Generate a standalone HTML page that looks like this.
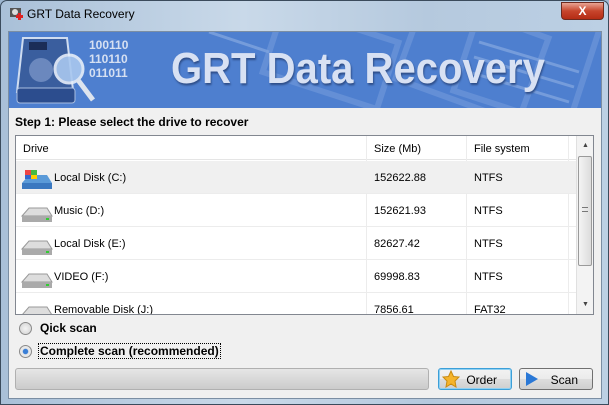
<!DOCTYPE html>
<html><head><meta charset="utf-8"><style>
*{margin:0;padding:0;box-sizing:border-box}
body{width:609px;height:405px;overflow:hidden;font-family:"Liberation Sans",sans-serif;font-size:11px;color:#000;background:#9db6d0}
.win{position:absolute;left:0;top:0;width:609px;height:405px;background:linear-gradient(90deg,#a9c0d8,#c9d9e9 40%,#b5c9de 70%,#bcd0e4);border:1px solid #3b4b5c;border-radius:7px 7px 0 0}
.title{position:absolute;left:26px;top:6px;font-size:12px;color:#000}
.close{position:absolute;left:560px;top:1px;width:43px;height:18px;border-radius:0 0 4px 4px;background:linear-gradient(#e8a493,#c7452c 50%,#b52c14);border:1px solid #6d2a1f;color:#fff;font-weight:bold;font-size:12px;text-align:center;line-height:16px}
.client{position:absolute;left:7px;top:30px;width:594px;height:368px;background:#f0f0f0;border:1px solid #7b8ea3}
.banner{position:absolute;left:0;top:0;width:592px;height:76px;background:#4e7fcf;overflow:hidden}
.bn{position:absolute;left:80px;top:6px;color:#d6e0f2;font-weight:bold;font-size:12px;line-height:14px}
.bt{position:absolute;left:162px;top:12px;color:#d8e1f3;font-weight:bold;font-size:44px;text-shadow:1px 2px 2px #2f4f8a;white-space:nowrap;transform:scaleX(0.91);transform-origin:0 0}
.step{position:absolute;left:6px;top:83px;font-weight:bold;font-size:12px}
.list{position:absolute;left:6px;top:103px;width:579px;height:180px;background:#fff;border:1px solid #828790;overflow:hidden}
.hdr{position:absolute;left:0;top:0;height:24px;width:560px;border-bottom:1px solid #e5e5e5;background:#fff}
.hdr span{position:absolute;top:7px}
.row{position:absolute;left:0;height:33px;width:560px;border-bottom:1px solid #ececec}
.row span{position:absolute;top:11px}
.c1{left:38px}.c2{left:358px}.c3{left:458px}
.sep{position:absolute;top:0;width:1px;height:180px;background:#ececec}
.sb{position:absolute;right:0;top:0;width:17px;height:178px;background:#f3f3f3;border-left:1px solid #e0e0e0}
.thumb{position:absolute;left:1px;top:20px;width:14px;height:110px;border:1px solid #9a9a9a;border-radius:2px;background:linear-gradient(90deg,#f4f4f4,#dcdcdc)}
.rad{position:absolute;left:10px;width:13px;height:13px;border-radius:50%;border:1px solid #8a8a8a;background:radial-gradient(#f4f4f4,#d0d0d0)}
.rl{position:absolute;left:31px;font-weight:bold;font-size:12px}
.prog{position:absolute;left:6px;top:336px;width:414px;height:22px;border:1px solid #b0b0b0;border-radius:3px;background:linear-gradient(#e6e6e6,#cbcbcb)}
.btn{position:absolute;top:336px;width:74px;height:22px;border:1px solid #707070;border-radius:3px;background:linear-gradient(#f2f2f2,#ebebeb 50%,#dddddd 51%,#cfcfcf);font-size:12px}
.btn span{position:absolute;right:14px;top:4px}
</style></head><body>
<div class="win">
<svg style="position:absolute;left:7px;top:5px" width="16" height="16"><rect x="2" y="2" width="11" height="9" fill="#555"/><circle cx="7" cy="6" r="3" fill="#ddd"/><rect x="8" y="9" width="7" height="3" fill="#d22"/><rect x="10" y="7" width="3" height="7" fill="#d22"/></svg>
<div class="title">GRT Data Recovery</div>
<div class="close">X</div>
<div class="client">
<div class="banner">
<svg style="position:absolute;left:0;top:0" width="592" height="76">
<g fill="none" stroke="#6a94d8" stroke-width="6" opacity="0.8">
<rect x="260" y="-10" width="120" height="70" transform="rotate(18 320 30)"/>
<rect x="400" y="-20" width="130" height="90" transform="rotate(20 460 20)"/>
<rect x="460" y="-30" width="120" height="110" transform="rotate(18 520 20)"/>
</g>
<g stroke="#7fa4de" stroke-width="3" opacity="0.8"><line x1="470" y1="10" x2="570" y2="40"/><line x1="465" y1="25" x2="565" y2="55"/><line x1="460" y1="40" x2="560" y2="70"/><line x1="200" y1="0" x2="260" y2="20"/></g>
<path d="M14 6 L58 6 L64 58 L8 60 Z" fill="#3a5e9e" stroke="#cfdcf0" stroke-width="2"/>
<rect x="8" y="56" width="58" height="15" rx="3" fill="#2c4d8e" stroke="#a8bde0"/>
<rect x="20" y="10" width="18" height="8" fill="#1b2d57"/>
<circle cx="32" cy="38" r="12" fill="#6b88be"/>
<circle cx="60" cy="37" r="14" fill="#a9c8ef" stroke="#e6eef9" stroke-width="3" opacity="0.9"/>
<line x1="69" y1="48" x2="84" y2="68" stroke="#dde4ee" stroke-width="5"/>
</svg>
<div class="bn">100110<br>110110<br>011011</div>
<div class="bt">GRT Data Recovery</div>
</div>
<div class="step">Step 1: Please select the drive to recover</div>
<div class="list">
<div class="hdr"><span style="left:7px">Drive</span><span class="c2">Size (Mb)</span><span class="c3">File system</span></div>
<div class="sep" style="left:350px"></div><div class="sep" style="left:450px"></div><div class="sep" style="left:552px"></div>
<div class="row" style="top:25px;background:#f0f0f0"><span class="c1">Local Disk (C:)</span><span class="c2">152622.88</span><span class="c3">NTFS</span></div>
<div class="row" style="top:58px"><span class="c1">Music (D:)</span><span class="c2">152621.93</span><span class="c3">NTFS</span></div>
<div class="row" style="top:91px"><span class="c1">Local Disk (E:)</span><span class="c2">82627.42</span><span class="c3">NTFS</span></div>
<div class="row" style="top:124px"><span class="c1">VIDEO (F:)</span><span class="c2">69998.83</span><span class="c3">NTFS</span></div>
<div class="row" style="top:157px"><span class="c1">Removable Disk (J:)</span><span class="c2">7856.61</span><span class="c3">FAT32</span></div>
<svg style="position:absolute;left:3px;top:25px" width="34" height="160">
<g><path d="M3 22 L10 14 L28 14 L33 22 Z" fill="#5a9ad8"/><rect x="3" y="22" width="30" height="6" fill="#3a78c0"/><rect x="6" y="9" width="6" height="5" fill="#e44"/><rect x="12" y="9" width="6" height="5" fill="#4b4"/><rect x="6" y="14" width="6" height="4" fill="#36c"/><rect x="12" y="14" width="6" height="4" fill="#fc0"/></g>
<g transform="translate(0,33)"><path d="M3 22 L10 14 L28 14 L33 22 Z" fill="#ddd" stroke="#999"/><rect x="3" y="22" width="30" height="6" fill="#aaa"/><rect x="27" y="24" width="3" height="2" fill="#3c3"/></g>
<g transform="translate(0,66)"><path d="M3 22 L10 14 L28 14 L33 22 Z" fill="#ddd" stroke="#999"/><rect x="3" y="22" width="30" height="6" fill="#aaa"/><rect x="27" y="24" width="3" height="2" fill="#3c3"/></g>
<g transform="translate(0,99)"><path d="M3 22 L10 14 L28 14 L33 22 Z" fill="#ddd" stroke="#999"/><rect x="3" y="22" width="30" height="6" fill="#aaa"/><rect x="27" y="24" width="3" height="2" fill="#3c3"/></g>
<g transform="translate(0,132)"><path d="M3 22 L10 14 L28 14 L33 22 Z" fill="#ddd" stroke="#999"/></g>
</svg>
<div class="sb"><div style="position:absolute;left:5px;top:6px;font-size:7px;color:#444">▲</div><div class="thumb"><div style="position:absolute;left:3px;top:50px;width:6px;height:5px;border-top:1px solid #777;border-bottom:1px solid #777"></div></div><div style="position:absolute;left:5px;top:165px;font-size:7px;color:#444">▼</div></div>
</div>
<div class="rad" style="top:290px"></div><div class="rl" style="top:289px">Qick scan</div>
<div class="rad" style="top:313px;background:radial-gradient(#3a7fd6 30%,#e8e8e8 40%)"></div><div class="rl" style="top:312px;outline:1px dotted #000;padding:0 1px;left:30px">Complete scan (recommended)</div>
<div class="prog"></div>
<div class="btn" style="left:429px;border-color:#3c9fd8;box-shadow:inset 0 0 0 1px #8fd0f2"><svg style="position:absolute;left:3px;top:1px" width="18" height="18"><polygon points="9,1 11.5,6.5 17,7 13,11 14,17 9,14 4,17 5,11 1,7 6.5,6.5" fill="#f5b42b" stroke="#c98a10"/></svg><span>Order</span></div>
<div class="btn" style="left:510px"><svg style="position:absolute;left:4px;top:2px" width="16" height="16"><polygon points="2,1 14,8 2,15" fill="#2a78d6"/></svg><span>Scan</span></div>
</div>
</div>
</body></html>
